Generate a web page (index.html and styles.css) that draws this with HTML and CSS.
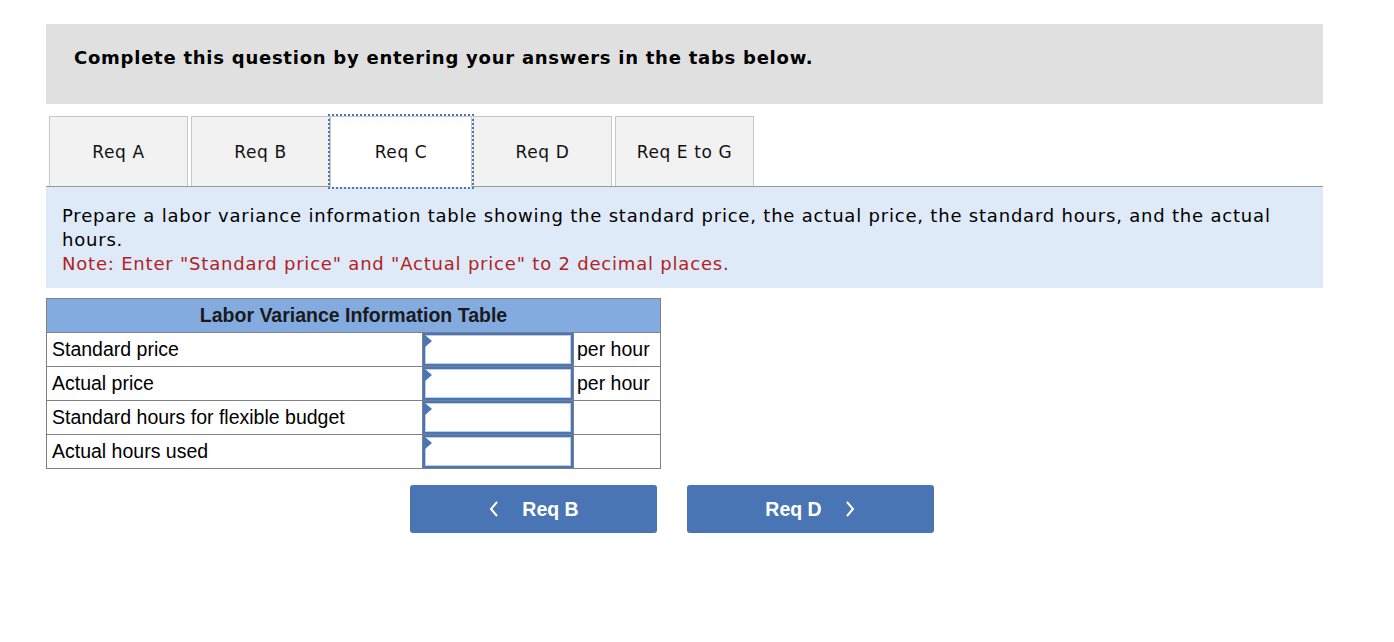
FILE: index.html
```html
<!DOCTYPE html>
<html lang="en">
<head>
  <meta charset="UTF-8">
  <meta name="viewport" content="width=device-width, initial-scale=1.0">
  <title>Req C</title>
  <link rel="stylesheet" href="styles.css">
</head>
<body>
  <div class="question">
    <div class="banner">Complete this question by entering your answers in the tabs below.</div>

    <div class="tabs">
      <div class="tab">Req A</div>
      <div class="tab">Req B</div>
      <div class="tab active">Req C</div>
      <div class="tab">Req D</div>
      <div class="tab">Req E to G</div>
    </div>

    <div class="prompt">
      <p>Prepare a labor variance information table showing the standard price, the actual price, the standard hours, and the actual hours.</p>
      <p class="note">Note: Enter "Standard price" and "Actual price" to 2 decimal places.</p>
    </div>

    <table class="answer">
      <thead>
        <tr><th colspan="3">Labor Variance Information Table</th></tr>
      </thead>
      <tbody>
        <tr>
          <td class="label">Standard price</td>
          <td class="field"><div class="input"></div></td>
          <td class="unit">per hour</td>
        </tr>
        <tr>
          <td class="label">Actual price</td>
          <td class="field"><div class="input"></div></td>
          <td class="unit">per hour</td>
        </tr>
        <tr>
          <td class="label">Standard hours for flexible budget</td>
          <td class="field"><div class="input"></div></td>
          <td class="unit"></td>
        </tr>
        <tr>
          <td class="label">Actual hours used</td>
          <td class="field"><div class="input"></div></td>
          <td class="unit"></td>
        </tr>
      </tbody>
    </table>

    <div class="nav">
      <button class="nav-btn">
        <svg width="12" height="18" viewBox="0 0 12 18"><path d="M9 2 L3 9 L9 16" fill="none" stroke="#fff" stroke-width="2"/></svg>
        <span>Req B</span>
      </button>
      <button class="nav-btn">
        <span>Req D</span>
        <svg width="12" height="18" viewBox="0 0 12 18"><path d="M3 2 L9 9 L3 16" fill="none" stroke="#fff" stroke-width="2"/></svg>
      </button>
    </div>
  </div>
</body>
</html>
```

FILE: styles.css
```css
body {
  margin: 0;
  background: #fff;
  color: #000;
  font-family: "DejaVu Sans", Verdana, sans-serif;
}

.question {
  width: 1277px;
  margin: 24px 0 0 46px;
}

/* grey instruction banner */
.banner {
  background: #e0e0e0;
  height: 80px;
  box-sizing: border-box;
  padding: 23px 0 0 28px;
  font-size: 18px;
  letter-spacing: 0.75px;
  font-weight: bold;
}

.tabs {
  display: flex;
  gap: 3px;
  margin-top: 12px;
  padding-left: 3px;
  border-bottom: 1px solid #999;
  height: 70px;
}

.tab {
  width: 137px;
  height: 69px;
  border: 1px solid #c8c8c8;
  border-bottom: none;
  background: #f2f2f2;
  display: flex;
  justify-content: center;
  align-items: center;
  font-size: 17px;
  letter-spacing: 0.6px;
  color: #111;
}

.tab.active {
  background: #fff;
  width: 140px;
  height: 70px;
  margin: 0 -2px 0 -3px;
  outline: 2px dotted #4a76c0;
  position: relative;
  z-index: 1;
}

.prompt {
  background: #deeaf8;
  padding: 17px 16px 12px;
  font-size: 18px;
  letter-spacing: 0.8px;
  line-height: 24px;
}

.prompt p {
  margin: 0;
}

.note {
  color: #b22222;
}

.answer {
  margin-top: 10px;
  border-collapse: collapse;
  width: 615px;
  font-family: "Liberation Sans", Arial, sans-serif;
  font-size: 19.5px;
}

.answer th {
  background: #84abe0;
  color: #1a1a1a;
  font-weight: bold;
  height: 33px;
  padding: 0;
  border: 1px solid #808080;
}

.answer td {
  border: 1px solid #808080;
  height: 33px;
  padding: 0 5px;
}

.answer tr:nth-child(even) td {
  height: 32.5px;
}

.answer td.label {
  width: 366px;
}

.answer td.field {
  width: 150px;
  padding: 0;
}

.answer td.unit {
  padding: 0 3px;
  width: 80px;
  white-space: nowrap;
}

.input {
  position: relative;
  height: 29px;
  border: 2px solid #4a76b5;
  box-shadow: inset 0 0 0 1px #b9cff0;
  background: #fff;
}

/* little marker in the top-left corner of each answer box */
.input::before {
  content: "";
  position: absolute;
  top: 0;
  left: 0;
  border-top: 6px solid transparent;
  border-bottom: 6px solid transparent;
  border-left: 7px solid #4a76b5;
}

.nav {
  display: flex;
  gap: 30px;
  margin: 16px 0 0 364px;
}

.nav-btn {
  width: 247px;
  height: 48px;
  background: #4a75b5;
  border: none;
  border-radius: 3px;
  color: #fff;
  font-family: "Liberation Sans", Arial, sans-serif;
  font-size: 19.5px;
  font-weight: bold;
  display: flex;
  justify-content: center;
  align-items: center;
  gap: 22px;
}
```
